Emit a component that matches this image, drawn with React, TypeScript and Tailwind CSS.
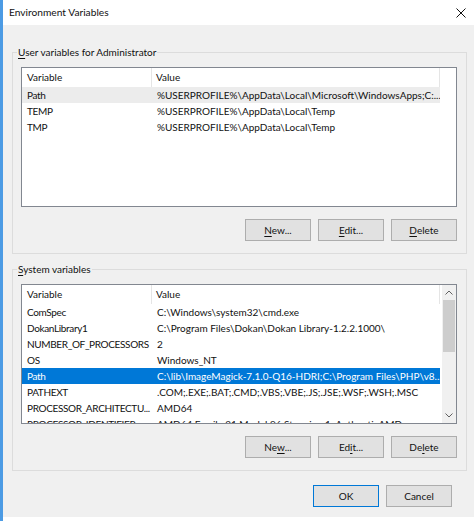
import type { ReactNode } from 'react';

type Row = { name: string; value: string };

const userRows: Row[] = [
  { name: 'Path', value: '%USERPROFILE%\\AppData\\Local\\Microsoft\\WindowsApps;C:...' },
  { name: 'TEMP', value: '%USERPROFILE%\\AppData\\Local\\Temp' },
  { name: 'TMP', value: '%USERPROFILE%\\AppData\\Local\\Temp' },
];

const systemRows: Row[] = [
  { name: 'ComSpec', value: 'C:\\Windows\\system32\\cmd.exe' },
  { name: 'DokanLibrary1', value: 'C:\\Program Files\\Dokan\\Dokan Library-1.2.2.1000\\' },
  { name: 'NUMBER_OF_PROCESSORS', value: '2' },
  { name: 'OS', value: 'Windows_NT' },
  { name: 'Path', value: 'C:\\lib\\ImageMagick-7.1.0-Q16-HDRI;C:\\Program Files\\PHP\\v8....' },
  { name: 'PATHEXT', value: '.COM;.EXE;.BAT;.CMD;.VBS;.VBE;.JS;.JSE;.WSF;.WSH;.MSC' },
  { name: 'PROCESSOR_ARCHITECTU...', value: 'AMD64' },
  { name: 'PROCESSOR_IDENTIFIER', value: 'AMD64 Family 21 Model 96 Stepping 1, AuthenticAMD' },
];

// underline the access-key letter at index i
function Key({ text, i }: { text: string; i: number }) {
  return (
    <>
      {text.slice(0, i)}
      <span className="underline underline-offset-2">{text[i]}</span>
      {text.slice(i + 1)}
    </>
  );
}

function Button({ children, primary }: { children: ReactNode; primary?: boolean }) {
  return (
    <button
      className={`w-[66px] h-[22px] bg-[#e1e1e1] border leading-[20px] text-center ${
        primary ? 'border-[#0078d7]' : 'border-[#adadad]'
      }`}
    >
      {children}
    </button>
  );
}

function VarList({ rows, selected, active, scroll }: { rows: Row[]; selected: number; active?: boolean; scroll?: boolean }) {
  return (
    <div className="h-[140px] border border-[#828790] bg-white flex overflow-hidden">
      <div className="flex-1 overflow-hidden">
        {/* header */}
        <div className="flex h-[19px] items-center">
          <div className="w-[130px] pl-[5px] border-r border-[#e5e5e5] leading-[19px]">Variable</div>
          <div className="w-[288px] pl-[4px] border-r border-[#e5e5e5] leading-[19px]">Value</div>
        </div>
        {rows.map((r, i) => {
          const sel = i === selected;
          const cls = sel ? (active ? 'bg-[#0078d7] text-white' : 'bg-[#ececec]') : '';
          return (
            <div key={r.name} className={`flex w-[418px] h-[16px] leading-[16px] whitespace-nowrap ${cls}`}>
              <div className="w-[130px] pl-[5px] overflow-hidden tracking-[-0.35px]">{r.name}</div>
              <div className="w-[288px] pl-[5px] overflow-hidden">{r.value}</div>
            </div>
          );
        })}
      </div>
      {scroll && (
        <div className="w-[14px] bg-[#f0f0f0] flex flex-col">
          <div className="h-[15px] flex items-center justify-center">
            <svg width="8" height="5" viewBox="0 0 8 5" fill="none" stroke="#606060" strokeWidth="1">
              <path d="M0.5 4.5 L4 1 L7.5 4.5" />
            </svg>
          </div>
          <div className="h-[52px] mx-[1px] bg-[#cdcdcd]" />
          <div className="flex-1" />
          <div className="h-[15px] flex items-center justify-center">
            <svg width="8" height="5" viewBox="0 0 8 5" fill="none" stroke="#606060" strokeWidth="1">
              <path d="M0.5 0.5 L4 4 L7.5 0.5" />
            </svg>
          </div>
        </div>
      )}
    </div>
  );
}

function Group({ label, children }: { label: ReactNode; children: ReactNode }) {
  return (
    <fieldset className="w-[455px] border border-[#dcdcdc]">
      <legend className="ml-[4px] px-[1px] h-[16px] leading-[16px]">{label}</legend>
      <div className="pt-[7px] pl-[8px] pr-[9px] pb-[12px]">{children}</div>
    </fieldset>
  );
}

export default function App() {
  return (
    <div className="w-[474px] h-[521px] flex bg-white text-[10px] text-[#111] font-['Lato',sans-serif] overflow-hidden">
      <div className="w-[3px] bg-[#4c9be4]" />
      <div className="flex-1 flex flex-col">
        {/* title bar */}
        <div className="h-[25px] flex items-center pl-[6px] pr-[8px]">
          <span className="flex-1 text-[10.2px]">Environment Variables</span>
          <svg width="10" height="10" viewBox="0 0 10 10" stroke="#111" strokeWidth="1">
            <path d="M0.5 0.5 L9.5 9.5 M9.5 0.5 L0.5 9.5" />
          </svg>
        </div>

        <div className="flex-1 bg-[#f0f0f0] pl-[9px] pt-[19px]">
          <Group label={<Key text="User variables for Administrator" i={0} />}>
            <VarList rows={userRows} selected={0} />
            <div className="flex justify-end gap-[7px] mt-[12px]">
              <Button><Key text="New..." i={0} /></Button>
              <Button><Key text="Edit..." i={0} /></Button>
              <Button><Key text="Delete" i={0} /></Button>
            </div>
          </Group>

          <div className="mt-[7px]">
            <Group label={<Key text="System variables" i={0} />}>
              <VarList rows={systemRows} selected={4} active scroll />
              <div className="flex justify-end gap-[7px] mt-[12px]">
                <Button><Key text="New..." i={2} /></Button>
                <Button><Key text="Edit..." i={2} /></Button>
                <Button><Key text="Delete" i={2} /></Button>
              </div>
            </Group>
          </div>

          <div className="w-[455px] flex justify-end gap-[7px] pr-[15px] mt-[14px]">
            <Button primary>OK</Button>
            <Button>Cancel</Button>
          </div>
        </div>
        <div className="h-[4px] bg-white" />
      </div>
    </div>
  );
}
